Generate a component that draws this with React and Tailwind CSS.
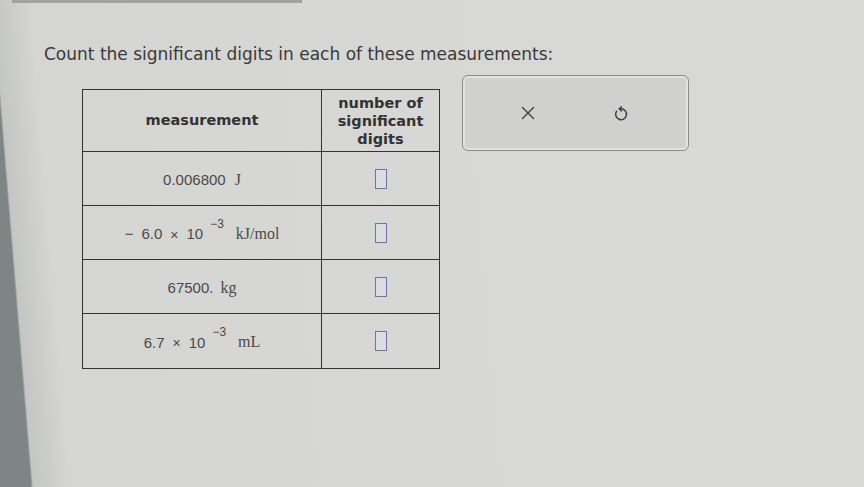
import React from "react";

const sans = "font-['DejaVu_Sans','Liberation_Sans',sans-serif]";
const num = "font-['Liberation_Sans',Arial,sans-serif]";
const serif = "font-['Liberation_Serif','Times_New_Roman',serif]";

function AnswerBox() {
  return <div className="h-[20px] w-[12px] border border-[#6d74a6] bg-[#dcdde2]" />;
}

function Sci({ mant, unit, neg }) {
  return (
    <div className="flex items-end text-[#4a4a4a]">
      {neg && <span className={`${num} mr-[8px] text-[15px]`}>−</span>}
      <span className={`${num} text-[15px]`}>{mant}</span>
      <span className={`${num} mx-[8px] text-[14px]`}>×</span>
      <span className={`${num} text-[15px]`}>10</span>
      <span className={`${num} -translate-y-[13px] ml-[7px] text-[12px]`}>−3</span>
      <span className={`${serif} ml-[12px] text-[16px]`}>{unit}</span>
    </div>
  );
}

const rows = [
  <div className="flex items-end text-[#4a4a4a]">
    <span className={`${num} text-[15px]`}>0.006800</span>
    <span className={`${serif} ml-[9px] text-[16px]`}>J</span>
  </div>,
  <Sci neg mant="6.0" unit="kJ/mol" />,
  <div className="flex items-end text-[#4a4a4a]">
    <span className={`${num} text-[15px]`}>67500.</span>
    <span className={`${serif} ml-[7px] text-[16px]`}>kg</span>
  </div>,
  <Sci mant="6.7" unit="mL" />,
];

export default function App() {
  return (
    <div className="h-[487px] w-[864px] overflow-hidden bg-[linear-gradient(85.3deg,#7f8587_31px,#c4c6c4_33px,#d5d5d3_70px,#d9d9d7_100%)]">
      <div className="ml-[12px] h-[3px] w-[290px] bg-[#a2a2a0]" />
      <h1 className={`${sans} pl-[44px] pt-[40px] text-[17px] leading-[22px] text-[#3a3a3a]`}>
        Count the significant digits in each of these measurements:
      </h1>
      <div className="ml-[82px] mt-[10px] flex items-start gap-[22px]">
        <div className="mt-[14px] w-[358px] border border-[#333]">
          <div className="grid h-[62px] grid-cols-[239px_1fr] border-b border-[#333]">
            <div className={`${sans} flex items-center justify-center border-r border-[#333] text-[14.5px] font-bold text-[#333]`}>
              measurement
            </div>
            <div className={`${sans} flex items-center justify-center text-center text-[14.5px] font-bold leading-[18px] text-[#333]`}>
              number of
              <br />
              significant
              <br />
              digits
            </div>
          </div>
          {rows.map((r, i) => (
            <div
              key={i}
              className={`grid h-[54px] grid-cols-[239px_1fr] ${i < rows.length - 1 ? "border-b border-[#333]" : ""}`}
            >
              <div className="flex items-center justify-center border-r border-[#333] pt-[2px]">{r}</div>
              <div className="flex items-center justify-center">
                <AnswerBox />
              </div>
            </div>
          ))}
        </div>
        <div className="flex h-[76px] w-[227px] items-center justify-around rounded-[6px] border border-[#8d8e8c] bg-[#d0d1cf] px-[20px] shadow-[inset_0_0_0_2px_#e2e3e1]">
          <svg width="16" height="16" viewBox="0 0 16 16" fill="none" stroke="#3c3f44" strokeWidth="1.4" strokeLinecap="round">
            <path d="M2.5 2.5 L13.5 13.5 M13.5 2.5 L2.5 13.5" />
          </svg>
          <svg width="20" height="20" viewBox="0 0 24 24" fill="none" stroke="#3c3f44" strokeWidth="1.8" strokeLinecap="round" strokeLinejoin="round">
            <path d="M6.7 9.8 A6.5 6.5 0 1 0 12 7 H10" />
            <path d="M12.5 4.5 L10 7 L12.5 9.5" />
          </svg>
        </div>
      </div>
    </div>
  );
}
